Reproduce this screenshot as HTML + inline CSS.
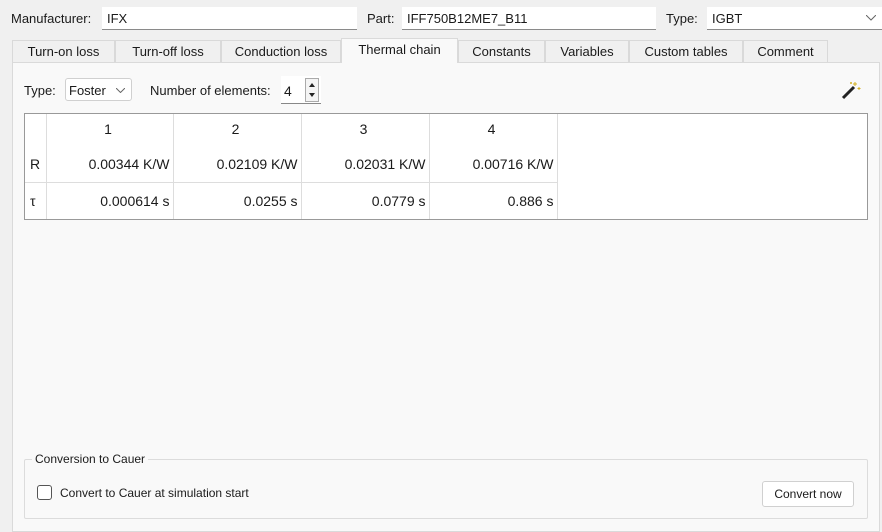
<!DOCTYPE html>
<html><head><style>
*{box-sizing:border-box;margin:0;padding:0}
body{width:882px;height:525px;background:#f0f0f0;font-family:"Liberation Sans",sans-serif;font-size:13px;color:#1a1a1a;position:relative;overflow:hidden}
.a{position:absolute;white-space:nowrap}
.inp{position:absolute;background:#fff;border-bottom:1px solid #8a8a8a;height:23px;padding:4px 5px;}
.tab{position:absolute;top:40px;height:22px;border:1px solid #d9d9d9;border-bottom:none;background:#f0f0f0;text-align:center;line-height:21px}
.panel{position:absolute;left:12px;top:62px;width:868px;height:470px;background:#f9f9f9;border:1px solid #dadada}
td{border-right:1px solid #ddd;text-align:right;padding-right:3px;font-size:14px}
</style></head><body>
<div class="a" style="left:11px;top:11px">Manufacturer:</div>
<div class="inp" style="left:102px;top:7px;width:255px">IFX</div>
<div class="a" style="left:367px;top:11px">Part:</div>
<div class="inp" style="left:402px;top:7px;width:254px">IFF750B12ME7_B11</div>
<div class="a" style="left:666px;top:11px">Type:</div>
<div class="inp" style="left:707px;top:7px;width:175px">IGBT<svg style="position:absolute;right:6px;top:8px" width="10" height="6"><path d="M0 0L5 5L10 0" fill="none" stroke="#666"/></svg></div>
<div class="panel"></div>
<div class="tab" style="left:12px;width:103px">Turn-on loss</div>
<div class="tab" style="left:115px;width:106px">Turn-off loss</div>
<div class="tab" style="left:221px;width:120px">Conduction loss</div>
<div class="tab" style="left:341px;top:38px;height:25px;width:117px;background:#f9f9f9;border-color:#dadada">Thermal chain</div>
<div class="tab" style="left:458px;width:87px">Constants</div>
<div class="tab" style="left:545px;width:84px">Variables</div>
<div class="tab" style="left:629px;width:114px">Custom tables</div>
<div class="tab" style="left:743px;width:85px">Comment</div>
<div class="a" style="left:24px;top:83px">Type:</div>
<div class="a" style="left:65px;top:78px;width:67px;height:23px;background:#fff;border:1px solid #d0d0d0;border-radius:3px;padding:4px 3px">Foster<svg style="position:absolute;right:6px;top:9px" width="9" height="5"><path d="M0 0L4.5 4.5L9 0" fill="none" stroke="#666"/></svg></div>
<div class="a" style="left:150px;top:83px">Number of elements:</div>
<div class="a" style="left:281px;top:76px;width:40px;height:28px;background:#fff;border-bottom:1px solid #888;padding:7px 3px;font-size:14px">4</div>
<div class="a" style="left:305px;top:78px;width:14px;height:24px;border:1px solid #aaa;background:#f4f4f4"><svg width="12" height="22"><path d="M3 8L6 4L9 8Z M3 14L6 18L9 14Z" fill="#222"/></svg></div>
<svg class="a" style="left:840px;top:79px" width="22" height="22"><path d="M3 19L14 8" stroke="#222" stroke-width="3"/><path d="M15 3v4M13 5h4M19 8v3M17.5 9.5h3M11 3v2M10 4h2" stroke="#d4b020" stroke-width="1"/></svg>
<div class="a" style="left:24px;top:113px;width:844px;height:107px;background:#fff;border:1px solid #999">
<table style="border-collapse:collapse;height:105px">
<tr style="height:32px"><td style="width:21px"></td><td style="width:127px;text-align:center;vertical-align:top;padding-top:7px">1</td><td style="width:128px;text-align:center;vertical-align:top;padding-top:7px">2</td><td style="width:128px;text-align:center;vertical-align:top;padding-top:7px">3</td><td style="width:128px;text-align:center;vertical-align:top;padding-top:7px">4</td></tr>
<tr style="height:36px"><td style="text-align:left;padding-left:5px;border-bottom:1px solid #ddd">R</td><td style="border-bottom:1px solid #ddd">0.00344 K/W</td><td style="border-bottom:1px solid #ddd">0.02109 K/W</td><td style="border-bottom:1px solid #ddd">0.02031 K/W</td><td style="border-bottom:1px solid #ddd">0.00716 K/W</td></tr>
<tr style="height:37px"><td style="text-align:left;padding-left:5px">τ</td><td>0.000614 s</td><td>0.0255 s</td><td>0.0779 s</td><td>0.886 s</td></tr>
</table></div>
<div class="a" style="left:24px;top:459px;width:844px;height:60px;border:1px solid #dcdcdc;border-radius:2px"></div>
<div class="a" style="left:32px;top:452px;background:#f9f9f9;padding:0 3px;font-size:12px">Conversion to Cauer</div>
<div class="a" style="left:37px;top:485px;width:15px;height:15px;border:1px solid #555;border-radius:3px;background:#fff"></div>
<div class="a" style="left:60px;top:486px;font-size:12px">Convert to Cauer at simulation start</div>
<div class="a" style="left:762px;top:481px;width:92px;height:26px;background:#fff;border:1px solid #d0d0d0;border-radius:3px;text-align:center;line-height:24px;font-size:12px">Convert now</div>
</body></html>
